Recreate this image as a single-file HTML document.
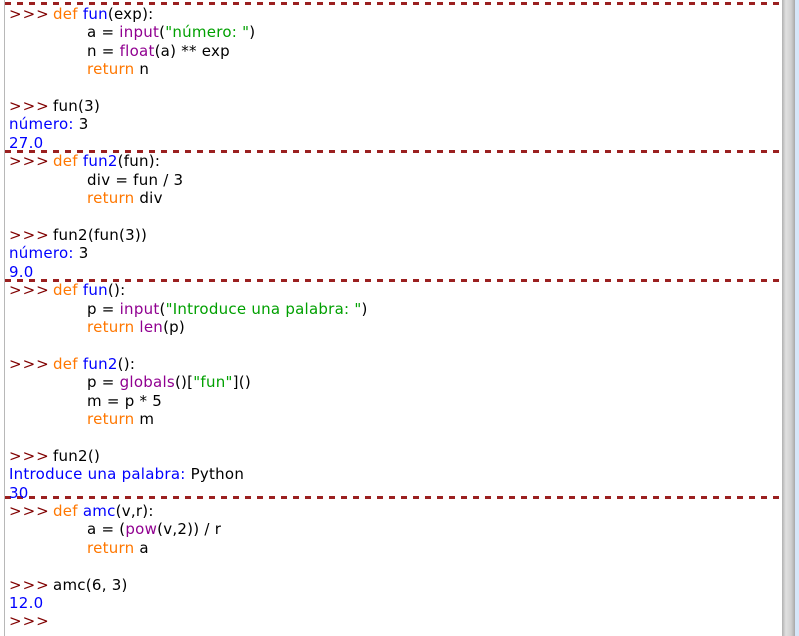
<!DOCTYPE html>
<html><head><meta charset="utf-8"><style>
html,body{margin:0;padding:0;background:#fff;width:799px;height:636px;overflow:hidden;position:relative}
.l{position:absolute;left:4px;top:0;width:1px;height:636px;background:#b8b8b8}
.sb{position:absolute;left:782px;top:0;width:13px;height:636px;background:linear-gradient(90deg,#b0b0b0,#e0e0e0 30%,#d0d0d0 70%,#a8a8a8)}
.sb2{position:absolute;left:795px;top:0;width:4px;height:636px;background:#d6e6f8}
.d{position:absolute;left:5px;width:777px;height:3px;background:repeating-linear-gradient(90deg,#9b2020 0 6px,transparent 6px 12px)}
pre{position:absolute;left:9px;top:5px;margin:0;font-family:"DejaVu Sans",sans-serif;font-size:15px;letter-spacing:0.25px;line-height:18.4px;color:#000}
.p{color:#800000;display:inline-block;width:44px;letter-spacing:1px}
.k{color:#ff7700}.f{color:#0000ff}.b{color:#900090}.s{color:#00a000}.o{color:#0000ff}
.i{display:inline-block;width:78px}
</style></head><body>
<div class="l"></div><div class="sb"></div><div class="sb2"></div>
<div class="d" style="top:2px"></div>
<div class="d" style="top:150px"></div>
<div class="d" style="top:279px"></div>
<div class="d" style="top:496px"></div>
<pre><span class="p">&gt;&gt;&gt;</span><span class="k">def</span> <span class="f">fun</span>(exp):
<span class="i"></span>a = <span class="b">input</span>(<span class="s">"número: "</span>)
<span class="i"></span>n = <span class="b">float</span>(a) ** exp
<span class="i"></span><span class="k">return</span> n

<span class="p">&gt;&gt;&gt;</span>fun(3)
<span class="o">número:</span> 3
<span class="o">27.0</span>
<span class="p">&gt;&gt;&gt;</span><span class="k">def</span> <span class="f">fun2</span>(fun):
<span class="i"></span>div = fun / 3
<span class="i"></span><span class="k">return</span> div

<span class="p">&gt;&gt;&gt;</span>fun2(fun(3))
<span class="o">número:</span> 3
<span class="o">9.0</span>
<span class="p">&gt;&gt;&gt;</span><span class="k">def</span> <span class="f">fun</span>():
<span class="i"></span>p = <span class="b">input</span>(<span class="s">"Introduce una palabra: "</span>)
<span class="i"></span><span class="k">return</span> <span class="b">len</span>(p)

<span class="p">&gt;&gt;&gt;</span><span class="k">def</span> <span class="f">fun2</span>():
<span class="i"></span>p = <span class="b">globals</span>()[<span class="s">"fun"</span>]()
<span class="i"></span>m = p * 5
<span class="i"></span><span class="k">return</span> m

<span class="p">&gt;&gt;&gt;</span>fun2()
<span class="o">Introduce una palabra:</span> Python
<span class="o">30</span>
<span class="p">&gt;&gt;&gt;</span><span class="k">def</span> <span class="f">amc</span>(v,r):
<span class="i"></span>a = (<span class="b">pow</span>(v,2)) / r
<span class="i"></span><span class="k">return</span> a

<span class="p">&gt;&gt;&gt;</span>amc(6, 3)
<span class="o">12.0</span>
<span class="p">&gt;&gt;&gt;</span></pre>
</body></html>
